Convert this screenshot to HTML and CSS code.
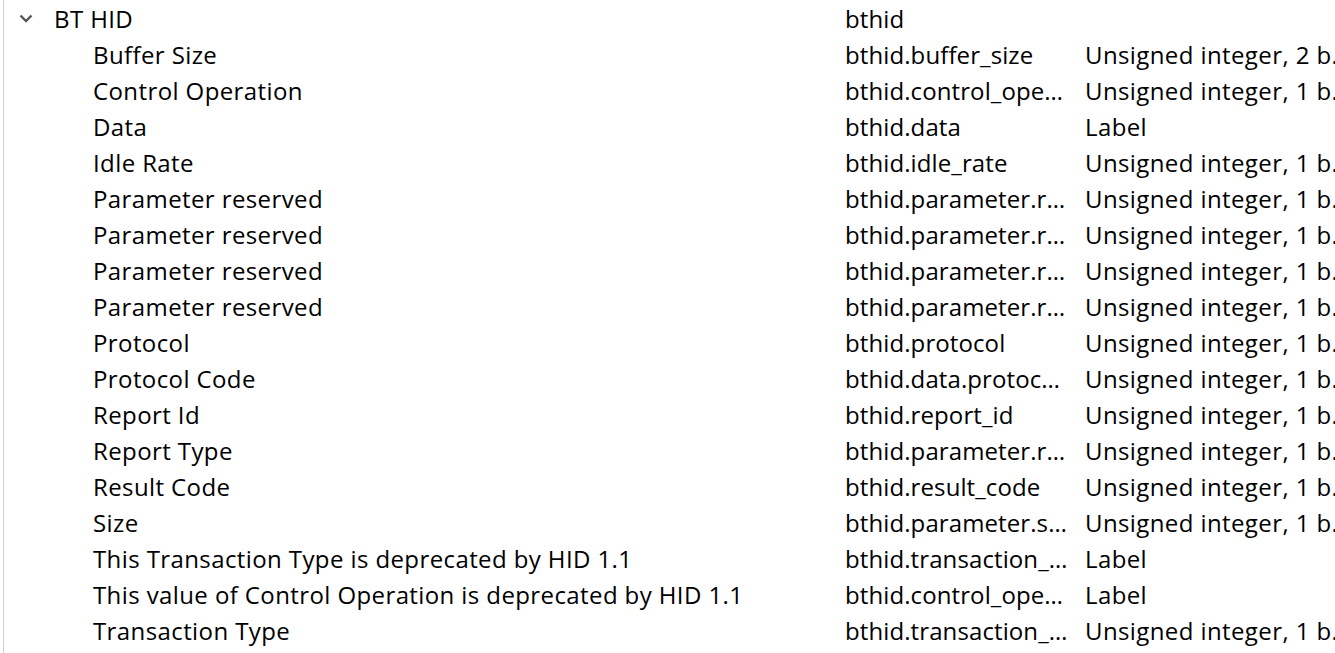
FILE: index.html
```html
<!DOCTYPE html>
<html>
<head>
<meta charset="utf-8">
<link rel="stylesheet" href="styles.css">
</head>
<body>
<div class="tree">
  <div class="row">
    <div class="name lvl0"><svg class="chev" width="14" height="9" viewBox="0 0 14 9"><path d="M1.5 1.5 L7 7 L12.5 1.5" fill="none" stroke="#555" stroke-width="2.4"/></svg><span>BT HID</span></div>
    <div class="field">bthid</div>
    <div class="type"></div>
  </div>
  <div class="row"><div class="name">Buffer Size</div><div class="field">bthid.buffer_size</div><div class="type">Unsigned integer, 2 bytes</div></div>
  <div class="row"><div class="name">Control Operation</div><div class="field">bthid.control_operation</div><div class="type">Unsigned integer, 1 byte</div></div>
  <div class="row"><div class="name">Data</div><div class="field">bthid.data</div><div class="type">Label</div></div>
  <div class="row"><div class="name">Idle Rate</div><div class="field">bthid.idle_rate</div><div class="type">Unsigned integer, 1 byte</div></div>
  <div class="row"><div class="name">Parameter reserved</div><div class="field">bthid.parameter.reserved</div><div class="type">Unsigned integer, 1 byte</div></div>
  <div class="row"><div class="name">Parameter reserved</div><div class="field">bthid.parameter.reserved</div><div class="type">Unsigned integer, 1 byte</div></div>
  <div class="row"><div class="name">Parameter reserved</div><div class="field">bthid.parameter.reserved</div><div class="type">Unsigned integer, 1 byte</div></div>
  <div class="row"><div class="name">Parameter reserved</div><div class="field">bthid.parameter.reserved</div><div class="type">Unsigned integer, 1 byte</div></div>
  <div class="row"><div class="name">Protocol</div><div class="field">bthid.protocol</div><div class="type">Unsigned integer, 1 byte</div></div>
  <div class="row"><div class="name">Protocol Code</div><div class="field">bthid.data.protocol_code</div><div class="type">Unsigned integer, 1 byte</div></div>
  <div class="row"><div class="name">Report Id</div><div class="field">bthid.report_id</div><div class="type">Unsigned integer, 1 byte</div></div>
  <div class="row"><div class="name">Report Type</div><div class="field">bthid.parameter.report_type</div><div class="type">Unsigned integer, 1 byte</div></div>
  <div class="row"><div class="name">Result Code</div><div class="field">bthid.result_code</div><div class="type">Unsigned integer, 1 byte</div></div>
  <div class="row"><div class="name">Size</div><div class="field">bthid.parameter.size</div><div class="type">Unsigned integer, 1 byte</div></div>
  <div class="row"><div class="name">This Transaction Type is deprecated by HID 1.1</div><div class="field">bthid.transaction_type.deprecated</div><div class="type">Label</div></div>
  <div class="row"><div class="name">This value of Control Operation is deprecated by HID 1.1</div><div class="field">bthid.control_operation.deprecated</div><div class="type">Label</div></div>
  <div class="row"><div class="name">Transaction Type</div><div class="field">bthid.transaction_type</div><div class="type">Unsigned integer, 1 byte</div></div>
</div>
</body>
</html>
```
FILE: styles.css
```css
html, body {
  margin: 0;
  padding: 0;
  background: #fff;
  overflow: hidden;
}
body {
  font-family: "Open Sans", "Noto Sans", sans-serif;
  font-size: 24px;
  letter-spacing: 0.4px;
  color: #000;
  width: 1335px;
  height: 653px;
}
.tree {
  margin-left: 3px;
  border-left: 1px solid #d0d0d0;
  height: 653px;
  box-sizing: border-box;
  overflow: hidden;
}
.row {
  display: grid;
  grid-template-columns: 841px 240px 273px;
  height: 36px;
  align-items: center;
  white-space: nowrap;
}
.name {
  padding-left: 89px;
  overflow: hidden;
}
.name.lvl0 {
  padding-left: 15px;
  display: flex;
  align-items: center;
}
.chev {
  margin-right: 21px;
}
.field {
  overflow: hidden;
  text-overflow: ellipsis;
  padding-right: 14px;
  letter-spacing: 0.1px;
}
.type {
  overflow: hidden;
  text-overflow: ellipsis;
}
```
